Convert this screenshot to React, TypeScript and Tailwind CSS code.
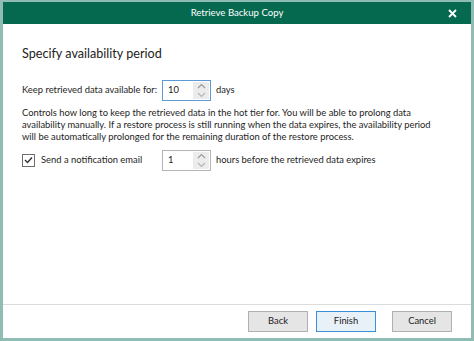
import React from "react";

function Spinner({ value, focused }: { value: string; focused?: boolean }) {
  return (
    <div
      className={`flex h-[21px] w-[49px] shrink-0 items-stretch border bg-white ${
        focused ? "border-[#5b9bd5]" : "border-[#b4b4b4]"
      }`}
    >
      <div className="flex flex-1 items-center pl-[5px] text-[#222]">{value}</div>
      <div className="my-[1px] mr-[1px] flex w-[16px] flex-col bg-[#ececec]">
        <div className="flex flex-1 items-center justify-center">
          <svg width="9" height="6" viewBox="0 0 9 6">
            <path d="M1 5 L4.5 1.5 L8 5" fill="none" stroke="#9a9a9a" strokeWidth="1.2" />
          </svg>
        </div>
        <div className="flex flex-1 items-center justify-center">
          <svg width="9" height="6" viewBox="0 0 9 6">
            <path d="M1 1 L4.5 4.5 L8 1" fill="none" stroke="#b5b5b5" strokeWidth="1.2" />
          </svg>
        </div>
      </div>
    </div>
  );
}

function Btn({ label, primary }: { label: string; primary?: boolean }) {
  return (
    <div
      className={`flex h-[21px] w-[60px] items-center justify-center border text-[#222] ${
        primary ? "border-[#3c8fd6] bg-[#e8f0f8]" : "border-[#b0b0b0] bg-[#e5e5e5]"
      }`}
    >
      {label}
    </div>
  );
}

export default function App() {
  return (
    <div
      className="flex h-[341px] w-[474px] flex-col bg-[#8fbdb3] px-[3px] pb-[3px] pt-[2px] text-[9.4px] text-[#1e1e1e]"
      style={{ fontFamily: 'Lato, "Noto Sans", sans-serif' }}
    >
      <div className="relative flex h-[22px] items-center justify-center bg-[#05694f] text-[9.6px] text-white">
        <span>Retrieve Backup Copy</span>
        <svg className="absolute right-[14px] top-[7px]" width="9" height="9" viewBox="0 0 9 9">
          <path d="M1 1 L8 8 M8 1 L1 8" stroke="white" strokeWidth="1.8" />
        </svg>
      </div>
      <div className="flex flex-1 flex-col bg-white">
        <div className="px-[19px] pt-[22px] text-[12.6px] leading-[16px] text-[#222]">
          Specify availability period
        </div>
        <div className="flex flex-col px-[19px] pt-[18px]">
          <div className="flex items-center whitespace-nowrap">
            <span className="w-[140px] shrink-0">Keep retrieved data available for:</span>
            <Spinner value="10" focused />
            <span className="ml-[5px]">days</span>
          </div>
          <div className="mt-[6px] whitespace-nowrap leading-[12px]">
            Controls how long to keep the retrieved data in the hot tier for. You will be able to prolong data
            <br />
            availability manually. If a restore process is still running when the data expires, the availability period
            <br />
            will be automatically prolonged for the remaining duration of the restore process.
          </div>
          <div className="mt-[7px] flex items-center whitespace-nowrap">
            <div className="flex w-[140px] shrink-0 items-center">
              <div className="flex h-[13px] w-[13px] items-center justify-center border border-[#6e6e6e] bg-white">
                <svg width="9" height="8" viewBox="0 0 9 8">
                  <path d="M1 4 L3.5 6.5 L8 1.5" fill="none" stroke="#333" strokeWidth="1.4" />
                </svg>
              </div>
              <span className="ml-[6px]">Send a notification email</span>
            </div>
            <Spinner value="1" />
            <span className="ml-[5px]">hours before the retrieved data expires</span>
          </div>
        </div>
        <div className="flex-1" />
        <div className="border-t border-[#dcdcdc]" />
        <div className="flex h-[33px] items-center justify-end pr-[19px]">
          <div className="flex items-center">
            <Btn label="Back" />
            <div className="w-[8px]" />
            <Btn label="Finish" primary />
            <div className="w-[16px]" />
            <Btn label="Cancel" />
          </div>
        </div>
      </div>
    </div>
  );
}
